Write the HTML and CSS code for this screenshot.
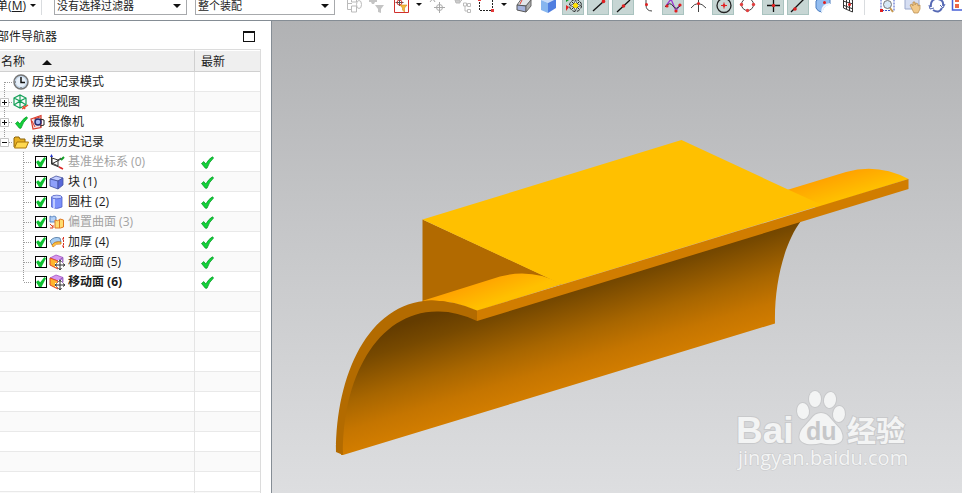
FILE: index.html
```html
<!DOCTYPE html>
<html lang="zh-CN">
<head>
    <meta charset="UTF-8">
    <meta name="viewport" content="width=device-width, initial-scale=1.0">
    <title>部件导航器</title>
    <link rel="stylesheet" href="styles.css">
</head>
<body>
    <!-- shared symbols -->
    <svg class="symbols" aria-hidden="true">
        <symbol id="tick" viewBox="0 0 13 13">
            <path d="M.5 7.5 2.8 5.6 4.8 8Q8 2.5 11.6.8L12.5 2Q8 6 6 12.2H4.4Z" fill="#12d23a" stroke="#0a9a28" stroke-width=".8"/>
        </symbol>
        <symbol id="root-first" viewBox="0 0 13 20">
            <path d="M4.5 10v10M5 10.5h8" fill="none" stroke="#9a9a9a" stroke-dasharray="1 1"/>
        </symbol>
        <symbol id="root-plus" viewBox="0 0 13 20">
            <path d="M4.5 0v20M9 10.5h4" fill="none" stroke="#9a9a9a" stroke-dasharray="1 1"/>
            <path d="M.5 6.5h8v8h-8z" fill="#fff" stroke="#c4c4c4"/>
            <path d="M2 10.5h5M4.5 8v5" stroke="#111"/>
        </symbol>
        <symbol id="root-minus" viewBox="0 0 13 20">
            <path d="M4.5 0v6M9 10.5h4" fill="none" stroke="#9a9a9a" stroke-dasharray="1 1"/>
            <path d="M.5 6.5h8v8h-8z" fill="#fff" stroke="#c4c4c4"/>
            <path d="M2 10.5h5" stroke="#111"/>
        </symbol>
        <symbol id="child-mid" viewBox="0 0 32 20">
            <path d="M23.500 0v20M24 10.500h8" fill="none" stroke="#9a9a9a" stroke-dasharray="1 1"/>
        </symbol>
        <symbol id="child-last" viewBox="0 0 32 20">
            <path d="M23.500 0v10M24 10.500h8" fill="none" stroke="#9a9a9a" stroke-dasharray="1 1"/>
        </symbol>
        <symbol id="move-face" viewBox="0 0 16 16">
            <path d="M1 4 7 1l7 2.500-5 3.500z" fill="#d69af0" stroke="#a050c0" stroke-width=".8"/>
            <path d="M1 4 9 7v8l-8-4z" fill="#ffb52e" stroke="#e0452c"/>
            <path d="M9 7l5-3.500V8l-5 7z" fill="#b98be0" stroke="#9054b4" stroke-width=".8"/>
            <path d="M11 6v10M6 11h10" stroke="#fff" stroke-width="4"/>
            <path d="M11 7v8M7 11h8M9.500 8 11 6l1.500 2M9.500 14l1.500 2 1.500-2M8 9.500 6 11l2 1.500M14 9.500l2 1.500-2 1.500" fill="none" stroke="#333"/>
        </symbol>
    </svg>

    <header class="toolbar">
        <button type="button" class="menu-btn"><span class="menu-text">菜单(<u>M</u>)</span><span class="caret"></span></button>
        <span class="separator"></span>
        <div class="combo combo-filter">
            <select aria-label="选择过滤器"><option>没有选择过滤器</option></select>
        </div>
        <div class="combo combo-scope">
            <select aria-label="选择范围"><option>整个装配</option></select>
        </div>

        <div class="tools">
            <button type="button" class="tool" aria-label="装配">
                <svg viewBox="0 -7 22 22" fill="none" stroke="#bbb"><path d="M5.500-3V9.500H10M5.500 3.500H10M9.500-1v3h5v-3zM9.500 6v6h5V6z"/><ellipse cx="17" cy="4.500" rx="2.500" ry="4"/></svg>
            </button>
            <button type="button" class="tool" aria-label="重置过滤器">
                <svg viewBox="0 -7 22 22" fill="#c4c4c4"><path d="M2-2h8v4H8l-1 2H5L4 2H2zM8 5h9l-3 4v4l-3-1V9z"/></svg>
            </button>
            <button type="button" class="tool tool-drop" aria-label="选择优先级">
                <svg viewBox="0 -7 22 22" fill="none"><path d="M2.500-5v17.500h14V-5" stroke="#d0302c"/><path d="M7.500-2v8M3.500 2.500h8" stroke="#555"/><circle cx="7.500" cy="2.500" r="2.500" stroke="#d0302c"/><path d="M8 5h7l-2.500 3v4L10.500 10V8z" fill="#f6b93a" stroke="#d48a1c" stroke-width=".6"/></svg>
                <span class="caret"></span>
            </button>
            <button type="button" class="tool" aria-label="捕捉点">
                <svg viewBox="0 -7 22 22" fill="none" stroke="#aaa"><path d="M12.500 2v11M7 7.500h11M3 2Q6-3 8 2"/><circle cx="12.500" cy="7.500" r="3"/></svg>
            </button>
            <button type="button" class="tool" aria-label="装配约束">
                <svg viewBox="0 -7 22 22" fill="none" stroke="#bbb"><path d="M2-1l5 4 4-4M11.500 3h3v3h-3zM13 6v5h2M15.500 3.500h3v3h-3zM15.500 9.500h3v3h-3z"/><path d="M3 0h5v3H4z" fill="#ccc"/></svg>
            </button>
            <button type="button" class="tool tool-drop" aria-label="矩形选择">
                <svg viewBox="0 -7 22 22" fill="none"><path d="M2.500-4v14.500h13V-4" stroke="#222" stroke-dasharray="2 1"/><path d="M14 9h3v3h-3zM1-2h3v3H1z" fill="#e43a3a"/></svg>
                <span class="caret"></span>
            </button>
            <button type="button" class="tool" aria-label="面">
                <svg viewBox="0 -7 22 22"><path d="M5 5 10-2l9 2-5 6z" fill="#e2e6ea" stroke="#666"/><path d="M5 5l9 1v6L5 10z" fill="#a4b2dc" stroke="#555"/><path d="M14 6l5-6v6l-5 6z" fill="#aaa" stroke="#666"/><path d="M11-2 8 4" stroke="#e23a30"/></svg>
            </button>
            <button type="button" class="tool" aria-label="体">
                <svg viewBox="0 -7 22 22"><path d="M4-4h15v3l-8 4-7-3z" fill="#c8dcf8"/><path d="M4 0l7 3v10l-7-3z" fill="#86b6ef"/><path d="M11 3l8-4v9l-8 5z" fill="#4f7ee0"/></svg>
            </button>
            <button type="button" class="tool active" aria-label="启用捕捉点">
                <svg viewBox="0 -7 22 22"><path d="M4-3l3 3-3 2z" fill="#16a030"/><path d="M4 5l3 2-3 4z" fill="#e02020"/><g stroke="#222" fill="none"><circle cx="13.500" cy="5.500" r="6" stroke-dasharray="3 1.700"/><path d="M9.500 1.500l8 8M17.500 1.500l-8 8"/></g><path d="M13.500 0l1.500 4 4 1.500-4 1.500-1.500 4-1.500-4-4-1.500 4-1.500z" fill="#fff" stroke="#333" stroke-width=".7"/><circle cx="13.500" cy="5.500" r="2.500" fill="#ffe000"/></svg>
            </button>
            <button type="button" class="tool active" aria-label="端点">
                <svg viewBox="0 -7 22 22"><path d="M6 11 17 1" stroke="#111" stroke-width="1.300"/><circle cx="16.500" cy="1.500" r="1.800" fill="#e02020"/></svg>
            </button>
            <button type="button" class="tool active" aria-label="中点">
                <svg viewBox="0 -7 22 22"><path d="M5 12 18 0" stroke="#111" stroke-width="1.300"/><circle cx="11.500" cy="6" r="1.800" fill="#e02020"/></svg>
            </button>
            <button type="button" class="tool" aria-label="控制点">
                <svg viewBox="0 -7 22 22"><path d="M9-5v10q0 6 6 6" fill="none" stroke="#444"/><circle cx="9.500" cy="4.500" r="1.500" fill="#e02020"/></svg>
            </button>
            <button type="button" class="tool active" aria-label="样条点">
                <svg viewBox="0 -7 22 22" fill="none"><path d="M4 6 9-1l5 12 4-7" stroke="#9a38d0" stroke-width="1.300"/><path d="M3 7q5-6 8-1t8-1" stroke="#333"/><g fill="#e02020"><circle cx="5" cy="6" r="1.600"/><circle cx="14" cy="11" r="1.600"/><circle cx="18" cy="5" r="1.600"/></g></svg>
            </button>
            <button type="button" class="tool" aria-label="交点">
                <svg viewBox="0 -7 22 22"><path d="M11.500-5v17M4 8Q11-1 19 8" fill="none" stroke="#444"/><circle cx="11.500" cy="3.500" r="1.500" fill="#e02020"/></svg>
            </button>
            <button type="button" class="tool active" aria-label="圆弧中心">
                <svg viewBox="0 -7 22 22"><circle cx="12" cy="5.500" r="7" fill="none" stroke="#222" stroke-width="1.300"/><path d="M9 5.500h6M12 2.500v6" stroke="#e02020"/><circle cx="12" cy="5.500" r="1.400" fill="#e02020"/></svg>
            </button>
            <button type="button" class="tool" aria-label="象限点">
                <svg viewBox="0 -7 22 22"><circle cx="10.500" cy="4.500" r="6" fill="none" stroke="#444"/><g fill="#e04040"><circle cx="4.500" cy="4.500" r="1.700"/><circle cx="16.500" cy="4.500" r="1.700"/><circle cx="10.500" cy="10.500" r="1.700"/></g></svg>
            </button>
            <button type="button" class="tool active" aria-label="现有点">
                <svg viewBox="0 -7 22 22"><path d="M5 5.500h13M11.500-2v14" stroke="#111" stroke-width="1.300"/><circle cx="11.500" cy="5.500" r="1.700" fill="#e02020"/></svg>
            </button>
            <button type="button" class="tool active" aria-label="曲线上的点">
                <svg viewBox="0 -7 22 22"><path d="M4 12 17-1" stroke="#111" stroke-width="1.300"/><circle cx="8" cy="9" r="1.800" fill="#e02020"/></svg>
            </button>
            <button type="button" class="tool" aria-label="面上的点">
                <svg viewBox="0 -7 22 22"><path d="M4 1q5-6 14-4v7Q11 5 10 12 6 12 4 8z" fill="#93bdf0" stroke="#4a7cc0"/><path d="M10 12Q10 5 18 4" fill="none" stroke="#eef6ff" stroke-width="2"/><circle cx="12.500" cy="2.500" r="1.500" fill="#e02020"/></svg>
            </button>
            <button type="button" class="tool" aria-label="栅格点">
                <svg viewBox="0 -7 22 22"><path d="M6.500-3v11l9 4V0zM9.500-2v11M12.500-1v12M6 1l10 3M6 5l10 4" fill="none" stroke="#333"/><circle cx="12.500" cy="4.500" r="1.500" fill="#e02020"/></svg>
            </button>
        </div>
        <span class="separator"></span>
        <div class="tools tools-view">
            <button type="button" class="tool" aria-label="缩放">
                <svg viewBox="0 -7 22 22" fill="none"><path d="M5 10.500V-2h13v12.500z" stroke="#3c56c8" stroke-dasharray="2 1"/><circle cx="11.500" cy="4.500" r="4" fill="#d6e8f6" stroke="#777"/><path d="M14 8l3 4" stroke="#c89a50" stroke-width="2"/><path d="M4 9h3v3H4z" fill="#e02020"/></svg>
            </button>
            <button type="button" class="tool" aria-label="平移">
                <svg viewBox="0 -7 22 22"><path d="M4-4h14V9H4z" fill="#d6def2" stroke="#9aa8cc"/><path d="M9 5l2-1 1 2V2h2v3l1-2 2 1v2l2-1v4l-2 4h-4z" fill="#f1c98a" stroke="#b58848" stroke-width=".7"/></svg>
            </button>
            <button type="button" class="tool" aria-label="旋转">
                <svg viewBox="0 -7 22 22" fill="none" stroke="#5669b4" stroke-width="2"><path d="M5 7Q4 1 9-1M7 10q6 4 9-2M17 6q1-6-5-7"/><path d="M3 5l1 4 4-1M19 4l-2 4-3-3" stroke-width="1"/></svg>
            </button>
            <button type="button" class="tool" aria-label="窗口">
                <svg viewBox="0 -7 22 22"><path d="M1.500-4v14H20" fill="#fff" stroke="#4a62d8" stroke-width="1.500"/><path d="M4-1h4v3H4zM4 4h4v4H4z" fill="#ee6644"/></svg>
            </button>
        </div>
    </header>

    <main class="workspace">
        <aside class="navigator">
            <div class="nav-title">
                <h1>部件导航器</h1>
                <button type="button" class="float-btn" aria-label="浮动"></button>
            </div>
            <div class="tree">
                <table>
                    <thead>
                        <tr>
                            <th class="col-name">名称<span class="sort"></span></th>
                            <th>最新</th>
                        </tr>
                    </thead>
                    <tbody>
                        <tr>
                            <td>
                                <div class="node">
                                    <svg class="guide-root"><use href="#root-first"/></svg>
                                    <svg class="icon" viewBox="0 0 16 16"><circle cx="8" cy="8" r="7" fill="#c3d5e8" stroke="#777" stroke-width="1.500"/><circle cx="8" cy="8" r="5" fill="#e8f1fa"/><path d="M8 3v5.500h4" fill="none" stroke="#111" stroke-width="1.500"/><path d="M8 13v1M2 8h1" stroke="#555"/></svg>
                                    <span class="label">历史记录模式</span>
                                </div>
                            </td>
                            <td></td>
                        </tr>
                        <tr>
                            <td>
                                <div class="node">
                                    <svg class="guide-root"><use href="#root-plus"/></svg>
                                    <svg class="icon" viewBox="0 0 16 16"><path d="M1 4 7 1l6 3v7l-6 3-6-3zM1 4l6 3 6-3M7 1v13M1 11l6-4 6 4" fill="none" stroke="#14a058" stroke-width="1.200"/><path d="M9 15l6-4M10 12l2 3" stroke="#f0482c" stroke-width="1.500"/></svg>
                                    <span class="label">模型视图</span>
                                </div>
                            </td>
                            <td></td>
                        </tr>
                        <tr>
                            <td>
                                <div class="node">
                                    <svg class="guide-root"><use href="#root-plus"/></svg>
                                    <svg class="icon" viewBox="0 0 16 16"><use href="#tick" x="2" y="2" width="13" height="13"/></svg>
                                    <svg class="icon" viewBox="0 0 16 16"><path d="M2 5 12 1.500v12L4 15z" fill="#f6dede" stroke="#d83a2a" stroke-width="1.200"/><path d="M5 5l6-2M6 13 3 7" stroke="#d83a2a"/><circle cx="9" cy="8" r="3" fill="#a9b9f0" stroke="#222a70" stroke-width="1.500"/><path d="M11 5l4 1v5l-4 1" fill="none" stroke="#222"/></svg>
                                    <span class="label">摄像机</span>
                                </div>
                            </td>
                            <td></td>
                        </tr>
                        <tr>
                            <td>
                                <div class="node">
                                    <svg class="guide-root"><use href="#root-minus"/></svg>
                                    <svg class="icon" viewBox="0 0 16 16"><path d="M1 13V4l1-1h4l1 2h5v3" fill="#e8b020" stroke="#8a6208"/><path d="M1.500 14 4 8h11.500L13 14z" fill="#ffd84e" stroke="#a87408"/></svg>
                                    <span class="label">模型历史记录</span>
                                </div>
                            </td>
                            <td></td>
                        </tr>
                        <tr>
                            <td>
                                <label class="node muted">
                                    <svg class="guide-child"><use href="#child-mid"/></svg>
                                    <input type="checkbox" checked>
                                    <svg class="icon" viewBox="0 0 16 16"><path d="M2.500 1v9l10 4M2.500 10 14 4M3 4l6 2v6L3 9zM9 6l3-2" fill="none" stroke="#333"/><path d="M1 3l1.500-3L4 3z" fill="#2436c8"/><path d="M12 6l3-3" stroke="#14a028" stroke-width="2"/><path d="M10 13l4 2" stroke="#e02828" stroke-width="1.500"/></svg>
                                    <span class="label">基准坐标系 (0)</span>
                                </label>
                            </td>
                            <td class="status"><svg><use href="#tick"/></svg></td>
                        </tr>
                        <tr>
                            <td>
                                <label class="node">
                                    <svg class="guide-child"><use href="#child-mid"/></svg>
                                    <input type="checkbox" checked>
                                    <svg class="icon" viewBox="0 0 16 16"><g stroke="#4250a0" stroke-width=".8"><path d="M1 5l6-3 7 2-5 3z" fill="#c4ceff"/><path d="M1 5l8 2v8l-8-3z" fill="#8ea0fa"/><path d="M9 7l5-3v7l-5 4z" fill="#5868d8"/></g></svg>
                                    <span class="label">块 (1)</span>
                                </label>
                            </td>
                            <td class="status"><svg><use href="#tick"/></svg></td>
                        </tr>
                        <tr>
                            <td>
                                <label class="node">
                                    <svg class="guide-child"><use href="#child-mid"/></svg>
                                    <input type="checkbox" checked>
                                    <svg class="icon" viewBox="0 0 16 16"><path d="M2.500 3v10q5 3 10.500 0V3z" fill="#7a90fa" stroke="#5060c8" stroke-width=".8"/><path d="M5 4v10" stroke="#c0ccff" stroke-width="2"/><ellipse cx="7.800" cy="3" rx="5.200" ry="1.800" fill="#c0ccff" stroke="#5060c8" stroke-width=".8"/></svg>
                                    <span class="label">圆柱 (2)</span>
                                </label>
                            </td>
                            <td class="status"><svg><use href="#tick"/></svg></td>
                        </tr>
                        <tr>
                            <td>
                                <label class="node muted">
                                    <svg class="guide-child"><use href="#child-mid"/></svg>
                                    <input type="checkbox" checked>
                                    <svg class="icon" viewBox="0 0 16 16"><path d="M1 2q2 2 4 0l2 1v5H1z" fill="#b4d0f6" stroke="#4274b8" stroke-width=".8"/><path d="M6 6q3 2 5-1l3.500 1v7l-3 1H6z" fill="#ffdc70" stroke="#e07820"/><path d="M10.500 6v8" stroke="#e07820"/><path d="M1 10l3 3M4 11v3H1" stroke="#e04020" fill="none"/></svg>
                                    <span class="label">偏置曲面 (3)</span>
                                </label>
                            </td>
                            <td class="status"><svg><use href="#tick"/></svg></td>
                        </tr>
                        <tr>
                            <td>
                                <label class="node">
                                    <svg class="guide-child"><use href="#child-mid"/></svg>
                                    <input type="checkbox" checked>
                                    <svg class="icon" viewBox="0 0 16 16"><path d="M1 7q4-5 10-3l1 4Q6 7 3 11z" fill="#a8cdf2" stroke="#47709c" stroke-width=".8"/><path d="M3 11q3-4 9-3v2q-5-1-8 3z" fill="#ffc43c" stroke="#d07a18" stroke-width=".8"/><path d="M14.500 3v11M13 5h3M13 12h3" stroke="#d83220" stroke-dasharray="2 1"/></svg>
                                    <span class="label">加厚 (4)</span>
                                </label>
                            </td>
                            <td class="status"><svg><use href="#tick"/></svg></td>
                        </tr>
                        <tr>
                            <td>
                                <label class="node">
                                    <svg class="guide-child"><use href="#child-mid"/></svg>
                                    <input type="checkbox" checked>
                                    <svg class="icon"><use href="#move-face"/></svg>
                                    <span class="label">移动面 (5)</span>
                                </label>
                            </td>
                            <td class="status"><svg><use href="#tick"/></svg></td>
                        </tr>
                        <tr>
                            <td>
                                <label class="node current">
                                    <svg class="guide-child"><use href="#child-last"/></svg>
                                    <input type="checkbox" checked>
                                    <svg class="icon"><use href="#move-face"/></svg>
                                    <span class="label">移动面 (6)</span>
                                </label>
                            </td>
                            <td class="status"><svg><use href="#tick"/></svg></td>
                        </tr>
                    </tbody>
                </table>
            </div>
        </aside>

        <section class="viewport">
            <svg class="model" viewBox="272 21 690 472" preserveAspectRatio="xMinYMin meet">
                <defs>
                    <linearGradient id="inner" gradientUnits="userSpaceOnUse" x1="400" y1="325" x2="431" y2="428">
                        <stop offset="0" stop-color="#643c00"/>
                        <stop offset=".2" stop-color="#774900"/>
                        <stop offset=".55" stop-color="#a86600"/>
                        <stop offset=".8" stop-color="#c57500"/>
                        <stop offset="1" stop-color="#d27d00"/>
                    </linearGradient>
                    <linearGradient id="lip" gradientUnits="userSpaceOnUse" x1="458" y1="288" x2="467" y2="312">
                        <stop offset="0" stop-color="#ffa200"/>
                        <stop offset="1" stop-color="#ffc000"/>
                    </linearGradient>
                    <linearGradient id="lip-back" gradientUnits="userSpaceOnUse" x1="816" y1="180" x2="823" y2="204">
                        <stop offset="0" stop-color="#ffa200"/>
                        <stop offset="1" stop-color="#ffc000"/>
                    </linearGradient>
                </defs>
                <!-- block -->
                <path d="M422.500 219.500V302H500L562 284z" fill="#b26a00"/>
                <!-- rear lip -->
                <path d="M787 190 846 172Q878 163 908.500 179L816 208z" fill="url(#lip-back)"/>
                <path d="M422.500 219.500 681.500 140 788 189.500 822 205 562 284.500z" fill="#ffc000"/>
                <!-- inside of the shell -->
                <path d="M341 455C341 380 372 310 437 310Q456 310 477 320L801 221C784 243 774 285 775 323.500L343 455z" fill="url(#inner)"/>
                <!-- front lip -->
                <path d="M422 301 500 276.500Q532 268 562 284L477 311Q448 298 422 301z" fill="url(#lip)"/>
                <path d="M477 310.500 908.500 179V189L477 321z" fill="#d17d00"/>
                <path d="M336 452C336 375 368 303 430 300.500Q453 300 477 310.500V321Q456 311 437 311.500C376 312 342 380 343 455z" fill="#b36b00"/>
            </svg>
            <svg class="watermark" viewBox="0 0 176 84">
                <g class="mark">
                    <ellipse cx="79" cy="11" rx="6" ry="8"/>
                    <ellipse cx="94" cy="12" rx="6" ry="8" transform="rotate(10 94 12)"/>
                    <ellipse cx="67" cy="23" rx="6" ry="8" transform="rotate(-5 67 23)"/>
                    <ellipse cx="103" cy="26" rx="6" ry="8" transform="rotate(5 103 26)"/>
                    <path d="M85 25Q91 25 95 31L104 41Q111 54 99 56 92 57 85 55 78 57 71 56 59 53 66 41L75 31Q79 25 85 25z"/>
                    <text class="brand" x="0" y="55">Bai</text>
                    <text class="brand-cn" x="111" y="54">经验</text>
                    <text class="site" x="2" y="77">jingyan.baidu.com</text>
                </g>
                <text class="brand-du" x="70" y="52">du</text>
            </svg>
        </section>
    </main>
</body>
</html>
```
FILE: styles.css
```css
* {
    margin: 0;
    padding: 0;
    box-sizing: border-box;
}

body {
    font-family: "Open Sans", "Noto Sans CJK SC", sans-serif;
    font-size: 12px;
    color: #1c1c1c;
    background-color: #fff;
    display: flex;
    flex-direction: column;
    height: 100vh;
    overflow: hidden;
}

button {
    font: inherit;
    color: inherit;
    background: none;
    border: none;
}

.symbols {
    position: absolute;
    width: 0;
    height: 0;
}

/* toolbar */
.toolbar {
    display: flex;
    align-items: flex-end;
    flex-shrink: 0;
    height: 21px;
    padding-bottom: 5px;
    border-bottom: 1px solid #858d95;
    overflow: hidden;
    font-size: 11px;
}

.menu-btn {
    display: flex;
    align-items: center;
    justify-content: flex-end;
    flex-shrink: 0;
    gap: 4px;
    width: 36px;
    height: 22px;
    padding-top: 2px;
    overflow: hidden;
    white-space: nowrap;
}

.menu-text {
    font-size: 12px;
}

.caret {
    flex-shrink: 0;
    border: 3px solid transparent;
    border-top-color: #111;
    border-bottom: none;
}

.separator {
    flex-shrink: 0;
    width: 1px;
    height: 22px;
    margin: 0 7px 0 5px;
    background-color: #d9dcdf;
}

.combo {
    position: relative;
    flex-shrink: 0;
    margin-left: 5px;
}

.combo + .combo {
    margin-left: 8px;
}

.combo-filter {
    width: 133px;
}

.combo-scope {
    width: 140px;
}

.combo select {
    display: block;
    appearance: none;
    width: 100%;
    height: 22px;
    padding: 3px 16px 0 2px;
    border: 1px solid #a7a9ac;
    border-radius: 0;
    background-color: #fff;
    color: #1c1c1c;
    font: inherit;
}

.combo::after {
    content: "";
    position: absolute;
    right: 6px;
    bottom: 7px;
    border: 4px solid transparent;
    border-top-color: #111;
    border-bottom: none;
    pointer-events: none;
}

.tools {
    display: flex;
    flex-shrink: 0;
    gap: 3px;
    margin-left: 7px;
}

.tools-view {
    margin-left: 4px;
}

.tool {
    display: flex;
    align-items: center;
    width: 22px;
    height: 22px;
}

.tool svg {
    flex-shrink: 0;
    width: 22px;
    height: 22px;
}

.tool.active {
    background-color: #c7d6d4;
    box-shadow: inset 0 0 0 1px #a9c3bf;
}

.tool-drop {
    width: 32px;
    gap: 2px;
}

/* part navigator */
.workspace {
    display: flex;
    flex: 1;
    min-height: 0;
}

.navigator {
    display: flex;
    flex-direction: column;
    flex-shrink: 0;
    width: 272px;
    padding-right: 10px;
    border-right: 1px solid #858d95;
}

.nav-title {
    display: flex;
    align-items: center;
    justify-content: space-between;
    height: 28px;
    padding: 2px 6px 0 0;
}

.nav-title h1 {
    display: flex;
    justify-content: flex-end;
    width: 57px;
    overflow: hidden;
    font-size: 12px;
    font-weight: normal;
    white-space: nowrap;
}

.float-btn {
    width: 12px;
    height: 11px;
    border: 1px solid #111;
    border-top-width: 2px;
}

.tree {
    flex: 1;
    min-height: 0;
    padding-top: 1px;
    border-top: 1px solid #dcdcdc;
    border-right: 1px solid #dcdcdc;
    background-image:
        linear-gradient(to right, transparent 194px, #e4e4e4 194px, #e4e4e4 195px, transparent 195px),
        repeating-linear-gradient(to bottom, #fff 0, #fff 19px, #e9e9e9 19px, #e9e9e9 20px, #fafafa 20px, #fafafa 39px, #e9e9e9 39px, #e9e9e9 40px);
    background-position: 0 0, 0 22px;
    background-repeat: no-repeat;
}

table {
    width: 100%;
    table-layout: fixed;
    border-collapse: collapse;
}

th {
    height: 21px;
    padding-left: 6px;
    background-color: #efefef;
    box-shadow: inset 0 -1px #d0d0d0;
    font-weight: normal;
    text-align: left;
    line-height: 20px;
}

.col-name {
    width: 195px;
    padding-left: 1px;
    box-shadow: inset -1px -1px #d0d0d0;
}

.sort {
    display: inline-block;
    margin-left: 17px;
    border: 5px solid transparent;
    border-bottom-color: #111;
    border-top: none;
    vertical-align: 1px;
}

td {
    height: 20px;
}

.node {
    display: flex;
    align-items: center;
    height: 20px;
    white-space: nowrap;
}

.guide-root {
    width: 13px;
    height: 20px;
}

.guide-child {
    width: 32px;
    height: 20px;
    margin-right: 3px;
}

.icon {
    width: 16px;
    height: 16px;
}

.label {
    margin-left: 3px;
    line-height: 20px;
}

.node input {
    appearance: none;
    display: grid;
    place-items: center;
    width: 12px;
    height: 12px;
    margin-right: 2px;
    border: 1px solid #000;
    background-color: #fff;
}

.node input:checked::before {
    content: "";
    width: 10px;
    height: 10px;
    background-color: #0fc032;
    clip-path: polygon(0 50%, 22% 32%, 42% 52%, 85% 0, 100% 12%, 55% 100%, 30% 100%);
}

.muted {
    color: #a3a3a3;
}

.current {
    font-weight: bold;
}

.status {
    padding-left: 6px;
}

.status svg {
    display: block;
    width: 13px;
    height: 13px;
}

/* graphics window */
.viewport {
    position: relative;
    flex: 1;
    min-width: 0;
    overflow: hidden;
    background: linear-gradient(to bottom, #b1b2b4, #c6c7c9 45%, #dddee0);
}

.model {
    display: block;
    width: 100%;
    height: 100%;
}

.watermark {
    position: absolute;
    right: 50px;
    bottom: 21px;
    width: 176px;
    height: 84px;
    overflow: visible;
}

.mark {
    fill: #f3f4f4;
    stroke: #c8c9cb;
    stroke-width: 2px;
    paint-order: stroke;
}

.brand {
    font: bold 37px "Liberation Sans", sans-serif;
}

.brand-du {
    font: bold 25px "Liberation Sans", sans-serif;
    fill: #c6c7c9;
}

.brand-cn {
    font: bold 29px "Noto Sans CJK SC", sans-serif;
}

.site {
    font: 20px "Open Sans", sans-serif;
    stroke-width: 1px;
}
```
